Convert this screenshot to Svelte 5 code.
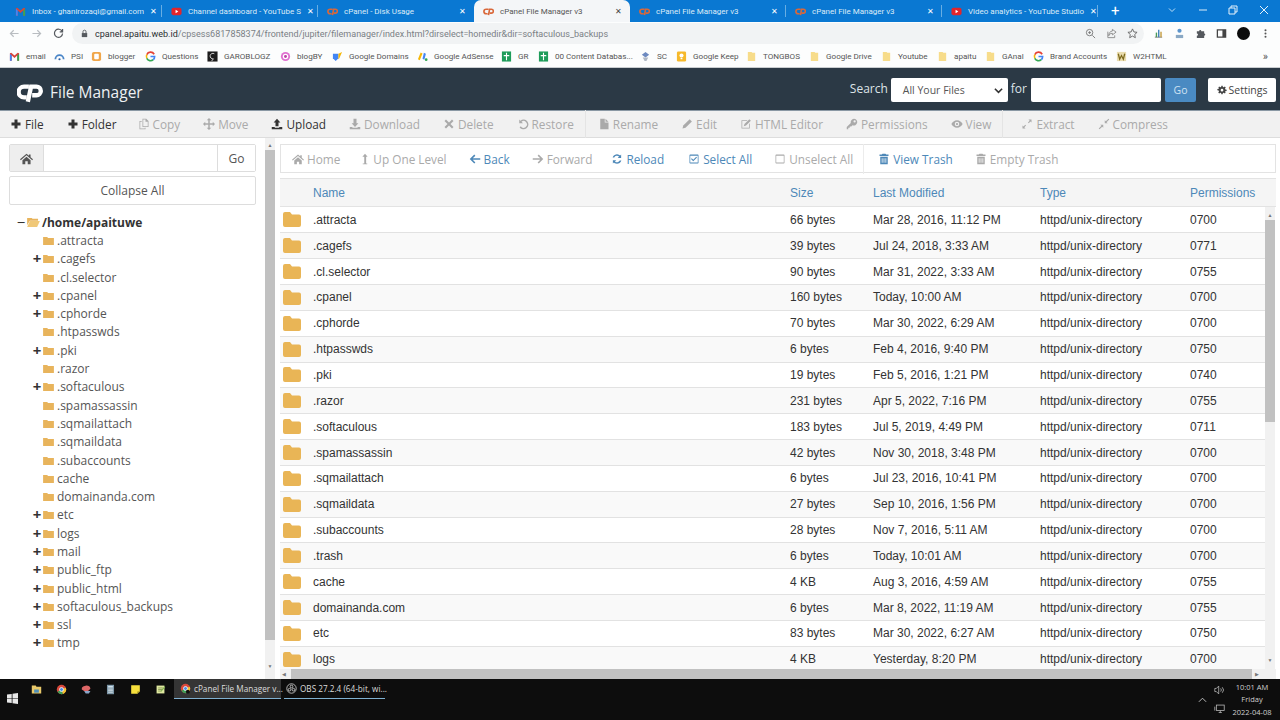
<script lang="ts">
  const icons: Record<string, string> = {
    plus: 'M6 2h4v4h4v4h-4v4H6v-4H2V6h4z',
    copy: 'M6 1h5l3 3v8H6zM7 2v9h6V5h-3V2zM2 4h3v1H3v9h6v-1h1v2H2z',
    move: 'M8 0l3 3H9v4h4V5l3 3-3 3V9H9v4h2l-3 3-3-3h2V9H3v2L0 8l3-3v2h4V3H5z',
    upload: 'M8 1l4.5 5H10v5H6V6H3.5zM1 12h4v1h6v-1h4v3H1z',
    download: 'M6 1h4v6h2.5L8 12 3.5 7H6zM1 12h3l1 1h6l1-1h3v3H1z',
    delete: 'M4 2l4 4 4-4 2 2-4 4 4 4-2 2-4-4-4 4-2-2 4-4-4-4z',
    restore: 'M3 2v5h5L6 5a4.5 4.5 0 1 1-1 6l-1.5 1.5A6.5 6.5 0 1 0 4.6 3.6z',
    rename: 'M3 1h6v5h5v9H3zM10 1l4 4h-4z',
    edit: 'M11.5 1.5l3 3L6 13l-4 1 1-4z',
    html: 'M2 3h8L9 4H3v9h9V8l1-1v7H2zM12.5 1.5l2 2L8 10l-3 1 1-3z',
    key: 'M10.5 1a4.5 4.5 0 1 1-1.9 8.6L7 11.2H5V13H3v2H1v-3l5.4-5.4A4.5 4.5 0 0 1 10.5 1zM11.5 3a1.5 1.5 0 1 0 0 3 1.5 1.5 0 0 0 0-3z',
    eye: 'M8 3c3.5 0 6 2.5 7.5 5-1.5 2.5-4 5-7.5 5S2 10.5.5 8C2 5.5 4.5 3 8 3zm0 2a3 3 0 1 0 0 6 3 3 0 0 0 0-6zm0 1.5a1.5 1.5 0 1 1 0 3 1.5 1.5 0 0 1 0-3z',
    expand: 'M10 2h4v4l-1.4-1.4-2.3 2.3-1-1 2.3-2.3zM2 14v-4l1.4 1.4 2.3-2.3 1 1-2.3 2.3L6 14z',
    compress: 'M15 2l-3.6 3.6L13 7H9V3l1.4 1.4L14 1zM1 14l3.6-3.6L3 9h4v4l-1.4-1.4L2 15z',
    home: 'M8 2l3 2.6V3h2v3.4L16 9l-1 1-7-6-7 6-1-1zM3 10l5-4.2L13 10v5H9.5v-3.5h-3V15H3z',
    up: 'M8 1l3.5 4H9.5v9H11v1H5v-1h2V5H4.5z',
    back: 'M7 2l1.5 1.5L5 7h10v2H5l3.5 3.5L7 14 1 8z',
    forward: 'M9 2L7.5 3.5 11 7H1v2h10l-3.5 3.5L9 14l6-6z',
    reload: 'M13.5 2v4.5H9l1.7-1.7A4 4 0 0 0 4.3 6H2.2a6 6 0 0 1 10-2.6zM2.5 14V9.5H7l-1.7 1.7A4 4 0 0 0 11.7 10h2.1a6 6 0 0 1-10 2.6z',
    check: 'M3 2h10a1 1 0 0 1 1 1v10a1 1 0 0 1-1 1H3a1 1 0 0 1-1-1V3a1 1 0 0 1 1-1zm0 1.5v9h10v-9zM7 11L4 8l1-1 2 2 4-4 1 1z',
    square: 'M3 2h10a1 1 0 0 1 1 1v10a1 1 0 0 1-1 1H3a1 1 0 0 1-1-1V3a1 1 0 0 1 1-1zm0 1.5v9h10v-9z',
    trash: 'M6 1h4l1 1h3v2H2V2h3zM3 5h10v10H3zM5 7v6h1V7zM7.5 7v6h1V7zM10 7v6h1V7z',
    gear: 'M7 1h2l.4 2 1.4.6L12.5 2.5 14 4l-1.2 1.7.6 1.4 2 .4v2l-2 .4-.6 1.4L14 12l-1.5 1.5-1.7-1.2-1.4.6-.4 2H7l-.4-2-1.4-.6L3.5 13.5 2 12l1.2-1.7-.6-1.4-2-.4v-2l2-.4.6-1.4L2 4l1.5-1.5 1.7 1.2 1.4-.6zM8 6a2.2 2.2 0 1 0 0 4.4A2.2 2.2 0 0 0 8 6z'
  };

  const tabs = [
    { title: 'Inbox - ghanirozaqi@gmail.com', fav: 'gmail' },
    { title: 'Channel dashboard - YouTube S', fav: 'yt' },
    { title: 'cPanel - Disk Usage', fav: 'cp' },
    { title: 'cPanel File Manager v3', fav: 'cp', active: true },
    { title: 'cPanel File Manager v3', fav: 'cp' },
    { title: 'cPanel File Manager v3', fav: 'cp' },
    { title: 'Video analytics - YouTube Studio', fav: 'yt' }
  ];

  const bookmarks = [
    { label: 'email', kind: 'gmail', w: 45 },
    { label: 'PSI', kind: 'psi', w: 37 },
    { label: 'blogger', kind: 'blogger', w: 54 },
    { label: 'Questions', kind: 'g', w: 62 },
    { label: 'GAROBLOGZ', kind: 'garo', w: 73 },
    { label: 'blogBY', kind: 'blogby', w: 52 },
    { label: 'Google Domains', kind: 'domains', w: 85 },
    { label: 'Google AdSense', kind: 'adsense', w: 84 },
    { label: 'GR', kind: 'sheet', w: 37 },
    { label: '00 Content Databas...', kind: 'sheet', w: 102 },
    { label: 'SC', kind: 'sc', w: 36 },
    { label: 'Google Keep', kind: 'keep', w: 70 },
    { label: 'TONGBOS', kind: 'fold', w: 63 },
    { label: 'Google Drive', kind: 'fold', w: 72 },
    { label: 'Youtube', kind: 'fold', w: 56 },
    { label: 'apaitu', kind: 'fold', w: 48 },
    { label: 'GAnal', kind: 'fold', w: 48 },
    { label: 'Brand Accounts', kind: 'g', w: 83 },
    { label: 'W2HTML', kind: 'w', w: 60 }
  ];

  const actions = [
    { label: 'File', icon: 'plus', on: true },
    { label: 'Folder', icon: 'plus', on: true },
    { label: 'Copy', icon: 'copy' },
    { label: 'Move', icon: 'move' },
    { label: 'Upload', icon: 'upload', on: true },
    { label: 'Download', icon: 'download' },
    { label: 'Delete', icon: 'delete' },
    { label: 'Restore', icon: 'restore', sep: true },
    { label: 'Rename', icon: 'rename' },
    { label: 'Edit', icon: 'edit' },
    { label: 'HTML Editor', icon: 'html' },
    { label: 'Permissions', icon: 'key' },
    { label: 'View', icon: 'eye', sep: true },
    { label: 'Extract', icon: 'expand' },
    { label: 'Compress', icon: 'compress' }
  ];

  const crumbs = [
    { label: 'Home', icon: 'home', tone: 'off' },
    { label: 'Up One Level', icon: 'up', tone: 'off' },
    { label: 'Back', icon: 'back', tone: 'link' },
    { label: 'Forward', icon: 'forward', tone: 'off' },
    { label: 'Reload', icon: 'reload', tone: 'link' },
    { label: 'Select All', icon: 'check', tone: 'link' },
    { label: 'Unselect All', icon: 'square', tone: 'off', sep: true },
    { label: 'View Trash', icon: 'trash', tone: 'link' },
    { label: 'Empty Trash', icon: 'trash', tone: 'off' }
  ];

  const tree = [
    { name: '.attracta' },
    { name: '.cagefs', more: true },
    { name: '.cl.selector' },
    { name: '.cpanel', more: true },
    { name: '.cphorde', more: true },
    { name: '.htpasswds' },
    { name: '.pki', more: true },
    { name: '.razor' },
    { name: '.softaculous', more: true },
    { name: '.spamassassin' },
    { name: '.sqmailattach' },
    { name: '.sqmaildata' },
    { name: '.subaccounts' },
    { name: 'cache' },
    { name: 'domainanda.com' },
    { name: 'etc', more: true },
    { name: 'logs', more: true },
    { name: 'mail', more: true },
    { name: 'public_ftp', more: true },
    { name: 'public_html', more: true },
    { name: 'softaculous_backups', more: true },
    { name: 'ssl', more: true },
    { name: 'tmp', more: true }
  ];

  const files = [
    ['.attracta', '66 bytes', 'Mar 28, 2016, 11:12 PM', '0700'],
    ['.cagefs', '39 bytes', 'Jul 24, 2018, 3:33 AM', '0771'],
    ['.cl.selector', '90 bytes', 'Mar 31, 2022, 3:33 AM', '0755'],
    ['.cpanel', '160 bytes', 'Today, 10:00 AM', '0700'],
    ['.cphorde', '70 bytes', 'Mar 30, 2022, 6:29 AM', '0700'],
    ['.htpasswds', '6 bytes', 'Feb 4, 2016, 9:40 PM', '0750'],
    ['.pki', '19 bytes', 'Feb 5, 2016, 1:21 PM', '0740'],
    ['.razor', '231 bytes', 'Apr 5, 2022, 7:16 PM', '0755'],
    ['.softaculous', '183 bytes', 'Jul 5, 2019, 4:49 PM', '0711'],
    ['.spamassassin', '42 bytes', 'Nov 30, 2018, 3:48 PM', '0700'],
    ['.sqmailattach', '6 bytes', 'Jul 23, 2016, 10:41 PM', '0700'],
    ['.sqmaildata', '27 bytes', 'Sep 10, 2016, 1:56 PM', '0700'],
    ['.subaccounts', '28 bytes', 'Nov 7, 2016, 5:11 AM', '0700'],
    ['.trash', '6 bytes', 'Today, 10:01 AM', '0700'],
    ['cache', '4 KB', 'Aug 3, 2016, 4:59 AM', '0755'],
    ['domainanda.com', '6 bytes', 'Mar 8, 2022, 11:19 AM', '0755'],
    ['etc', '83 bytes', 'Mar 30, 2022, 6:27 AM', '0750'],
    ['logs', '4 KB', 'Yesterday, 8:20 PM', '0700']
  ];
</script>

{#snippet icon(name: string, cls = 'ico')}
  <svg class={cls} viewBox="0 0 16 16" aria-hidden="true"><path fill="currentColor" fill-rule="evenodd" d={icons[name]} /></svg>
{/snippet}

{#snippet cplogo(color: string, size: number)}
  <svg width={size} height={size} viewBox="0 0 24 24" aria-hidden="true">
    <path d="M11 7H6.500a4.500 4.500 0 0 0 0 10H9" fill="none" stroke={color} stroke-width="4" />
    <path d="M10 21l3-14h5a4 4 0 0 1 0 8h-4" fill="none" stroke={color} stroke-width="4" />
  </svg>
{/snippet}

{#snippet favicon(kind: string)}
  <svg class="fav" viewBox="0 0 12 12" aria-hidden="true">
    {#if kind === 'gmail'}
      <path d="M1 2.500v8h2V5l3 2.500L9 5v5.500h2v-8L9.500 2 6 5 2.500 2z" fill="#d9453a" /><path d="M9 5l2-2v7.500H9z" fill="#34a853" /><path d="M1 3l2 2v5.500H1z" fill="#4285f4" />
    {:else if kind === 'yt'}
      <rect x="0.500" y="2" width="11" height="8" rx="2" fill="#e3252b" /><path d="M5 4.200L8 6 5 7.800z" fill="#fff" />
    {:else if kind === 'cp'}
      <path d="M6 3.500H3.500a2.500 2.500 0 0 0 0 5H5M6 10l1.200-6.500h2a2 2 0 0 1 0 4.200H7.500" fill="none" stroke="#d9683a" stroke-width="1.800" />
    {:else if kind === 'psi'}
      <path d="M1.500 9a4.500 4.500 0 0 1 9 0" fill="none" stroke="#4a86c8" stroke-width="2" /><circle cx="6" cy="9" r="1.200" fill="#2a5fa5" />
    {:else if kind === 'blogger'}
      <rect x="1" y="1" width="10" height="10" rx="2" fill="#f0a64a" /><rect x="3.500" y="3" width="5" height="6" rx="1" fill="#fff" />
    {:else if kind === 'g'}
      <path d="M10 3.500A4.500 4.500 0 0 0 2 4" fill="none" stroke="#e44235" stroke-width="1.800" /><path d="M2 4a4.500 4.500 0 0 0 0 4" fill="none" stroke="#f6b704" stroke-width="1.800" /><path d="M2 8a4.500 4.500 0 0 0 7 1.500" fill="none" stroke="#34a853" stroke-width="1.800" /><path d="M6 6h4.500A4.500 4.500 0 0 1 9 9.500" fill="none" stroke="#4285f4" stroke-width="1.800" />
    {:else if kind === 'garo'}
      <rect x="0.500" y="0.500" width="11" height="11" fill="#1c1c1c" /><path d="M8 3a3 3 0 1 0-1 5.500L5 11" fill="none" stroke="#ddd" />
    {:else if kind === 'blogby'}
      <circle cx="6" cy="6" r="5" fill="#e070d0" /><circle cx="6" cy="6" r="3" fill="#fff" /><circle cx="6" cy="6" r="1.600" fill="#c040a8" />
    {:else if kind === 'domains'}
      <path d="M1 3h6v5L4 11 1 8z" fill="#4285f4" /><path d="M7 3l4-2-3 7-1 1z" fill="#f6b704" />
    {:else if kind === 'adsense'}
      <path d="M4 1.500l2 1.200L3 10 1 9z" fill="#f6b704" /><path d="M7.500 2l2.200 1L8 9.500 6 8.500z" fill="#4285f4" /><circle cx="10" cy="9.500" r="1.500" fill="#34a853" />
    {:else if kind === 'sheet'}
      <rect x="1" y="0.500" width="10" height="11" fill="#1e9c5a" /><path d="M6 2v8M3 5h6" stroke="#fff" stroke-width="1.200" />
    {:else if kind === 'sc'}
      <path d="M6 1l4 3-4 3-4-3z" fill="#6d8ac0" /><path d="M3 7h6l-2 4H5z" fill="#b0b8c4" />
    {:else if kind === 'keep'}
      <rect x="1" y="0.500" width="10" height="11" rx="1.500" fill="#f6b92b" /><circle cx="6" cy="5" r="2.200" fill="#fff" /><rect x="5" y="7.500" width="2" height="1.500" fill="#fff" />
    {:else if kind === 'fold'}
      <path d="M2 1h4l1 1h3v9H2z" fill="#f7dc8a" />
    {:else if kind === 'w'}
      <rect x="1" y="1" width="10" height="10" fill="#e9dcae" /><path d="M2.500 3l1.500 6 2-4 2 4 1.500-6" fill="none" stroke="#7d6a1e" stroke-width="1.400" />
    {/if}
  </svg>
{/snippet}

<div class="screen">
  <div class="tabstrip">
    {#each tabs as tab, i}
      <div class="tab" class:active={tab.active} class:nosep={tab.active || tabs[i + 1]?.active || i === 2}>
        {@render favicon(tab.fav)}
        <span class="tab-title">{tab.title}</span>
        <span class="tab-x">✕</span>
      </div>
    {/each}
    <span class="newtab">+</span>
    <div class="winctl">
      <svg width="10" height="10" viewBox="0 0 10 10"><path d="M2 3.500L5 6.500l3-3" fill="none" stroke="#bfe0f7" /></svg>
      <svg width="10" height="10" viewBox="0 0 10 10"><path d="M1 5h8" stroke="#dcecf8" /></svg>
      <svg width="10" height="10" viewBox="0 0 10 10"><path d="M1 3h6v6H1zM3 3V1h6v6H7" fill="none" stroke="#e6f2fb" /></svg>
      <svg width="10" height="10" viewBox="0 0 10 10"><path d="M1 1l8 8M9 1L1 9" stroke="#e6f2fb" /></svg>
    </div>
  </div>

  <div class="addressbar">
    <div class="nav-btns">
      <svg viewBox="0 0 16 16"><path d="M13 8H3M7 4L3 8l4 4" fill="none" stroke="#b9bdc1" stroke-width="1.500" /></svg>
      <svg viewBox="0 0 16 16"><path d="M3 8h10M9 4l4 4-4 4" fill="none" stroke="#b9bdc1" stroke-width="1.500" /></svg>
      <svg viewBox="0 0 16 16"><path d="M12.500 5.500A5 5 0 1 0 13 8M13 2.500v3.500H9.500" fill="none" stroke="#55595e" stroke-width="1.500" /></svg>
    </div>
    <div class="omnibox">
      <svg class="lock" viewBox="0 0 10 10"><path d="M2 4.500h6V9H2z" fill="#55595e" /><path d="M3.300 4.500V3a1.700 1.700 0 0 1 3.400 0v1.500" fill="none" stroke="#55595e" /></svg>
      <span class="url"><b>cpanel.apaitu.web.id</b>/cpsess6817858374/frontend/jupiter/filemanager/index.html?dirselect=homedir&amp;dir=softaculous_backups</span>
      <div class="omni-tools">
        <svg viewBox="0 0 12 12"><circle cx="5" cy="5" r="3.500" fill="none" stroke="#777" /><path d="M8 8l3 3M3.500 5h3M5 3.500v3" stroke="#777" /></svg>
        <svg viewBox="0 0 12 12"><path d="M7 1.500L11 4.500 7 7.500V5.800C4.500 5.800 3.500 7 3 8.500 3 5.500 4.500 3.500 7 3.300zM2 4v6.500h7.500V8" fill="none" stroke="#8a8a8a" /></svg>
        <svg viewBox="0 0 12 12"><path d="M6 1l1.500 3.300 3.500.4-2.600 2.400.7 3.500L6 8.800l-3.100 1.800.7-3.500L1 4.700l3.500-.4z" fill="none" stroke="#666" /></svg>
      </div>
    </div>
    <div class="ext-btns">
      <svg viewBox="0 0 12 12"><path d="M2 10h8" stroke="#777" /><path d="M3 5h1.500v5H3z" fill="#4a9a5a" /><path d="M5.500 2H7v8H5.500z" fill="#3e7fb8" /><path d="M8 4h1.500v6H8z" fill="#c49a3a" /></svg>
      <svg viewBox="0 0 12 12"><circle cx="6" cy="3" r="2.300" fill="#5b94cc" /><path d="M2 11V7.500h8V11z" fill="#8aa8c4" /></svg>
      <svg viewBox="0 0 12 12"><path d="M2 3.500h2.500a1.200 1.200 0 0 1 2.400 0H10V6a1.200 1.200 0 0 1 0 2.400V11H2V8.500a1.200 1.200 0 0 0 0-2.500z" fill="#55595e" /></svg>
      <svg viewBox="0 0 12 12"><path d="M1.500 2h9v8h-9z" fill="none" stroke="#444" stroke-width="1.400" /><path d="M7 2h3.500v8H7z" fill="#444" /></svg>
      <span class="avatar"></span>
      <svg viewBox="0 0 12 12"><circle cx="6" cy="2.500" r="1.100" fill="#555" /><circle cx="6" cy="6" r="1.100" fill="#555" /><circle cx="6" cy="9.500" r="1.100" fill="#555" /></svg>
    </div>
  </div>

  <div class="bookmarks">
    {#each bookmarks as mark}
      <span class="mark" style={`width:${mark.w}px`}>
        {@render favicon(mark.kind)}
        <span>{mark.label}</span>
      </span>
    {/each}
    <span class="more-marks">»</span>
  </div>

  <header class="brand">
    <div class="logo">
      {@render cplogo('#fff', 26)}
      <span>File Manager</span>
    </div>
    <form class="search" onsubmit={(e) => e.preventDefault()}>
      <span class="search-label">Search</span>
      <span class="select">All Your Files
        <svg width="9" height="9" viewBox="0 0 10 10"><path d="M1 3l4 4 4-4" fill="none" stroke="#333" stroke-width="1.800" /></svg>
      </span>
      <span class="search-label for">for</span>
      <input type="text" aria-label="Search" />
      <button type="submit" class="go">Go</button>
      <button type="button" class="settings">{@render icon('gear', 'gear')}Settings</button>
    </form>
  </header>

  <nav class="actions">
    {#each actions as action}
      <span class="action" class:on={action.on} class:sep={action.sep}>{@render icon(action.icon)}{action.label}</span>
    {/each}
  </nav>

  <main class="body">
    <aside class="side">
      <div class="side-col">
        <div class="path-group">
          <span class="addon">{@render icon('home', 'ico home')}</span>
          <span class="path-input"></span>
          <span class="addon go-add">Go</span>
        </div>
        <button type="button" class="collapse">Collapse All</button>
        <ul class="tree">
          <li class="root">
            <span class="toggle root-toggle">−</span>
            <svg class="tf open" viewBox="0 0 14 11"><path d="M0 1h5l1 1h6v2H3L0 9z" fill="#e8b45c" /><path d="M3 4.500h11L11 11H0z" fill="#f0c878" /></svg>
            <span>/home/apaituwe</span>
          </li>
          {#each tree as node}
            <li>
              <span class="toggle">{node.more ? '+' : ''}</span>
              <svg class="tf" viewBox="0 0 12 10"><path d="M0 1h4.500l1 1.200H12V10H0z" fill="#e8b45c" /></svg>
              <span>{node.name}</span>
            </li>
          {/each}
        </ul>
      </div>
      <div class="vbar side-bar">
        <span class="arrow">▲</span>
        <span class="thumb"></span>
        <span class="arrow end">▼</span>
      </div>
    </aside>

    <section class="content">
      <div class="crumbs">
        {#each crumbs as c}
          <span class="crumb {c.tone}" class:sep={c.sep}>{@render icon(c.icon)}{c.label}</span>
        {/each}
      </div>
      <div class="table">
        <div class="row head">
          <span></span><span>Name</span><span>Size</span><span>Last Modified</span><span>Type</span><span>Permissions</span>
        </div>
        <div class="table-mid">
          <div class="rows">
            {#each files as f}
              <div class="row">
                <svg class="rf" viewBox="0 0 18 15"><path d="M2 0h5l2 2.500h7a2 2 0 0 1 2 2V13a2 2 0 0 1-2 2H2a2 2 0 0 1-2-2V2a2 2 0 0 1 2-2z" fill="#e9b556" /></svg>
                <span>{f[0]}</span>
                <span>{f[1]}</span>
                <span>{f[2]}</span>
                <span>httpd/unix-directory</span>
                <span>{f[3]}</span>
              </div>
            {/each}
          </div>
          <div class="vbar table-bar">
            <span class="arrow">▲</span>
            <span class="thumb"></span>
            <span class="arrow end">▼</span>
          </div>
        </div>
        <div class="hbar">
          <span class="arrow">◀</span>
          <span class="hthumb"></span>
          <span class="arrow">▶</span>
        </div>
      </div>
    </section>
  </main>

  <footer class="taskbar">
    <svg class="start" viewBox="0 0 14 14"><path d="M0 2l6-.8v5.400H0zM7 1l7-1v6.600H7zM0 7.400h6v5.400L0 12zM7 7.400h7V14l-7-1z" fill="#e8e8e8" /></svg>
    <div class="task-icons">
      <svg viewBox="0 0 14 14"><path d="M1 2h5l1 1.500h6V12H1z" fill="#e9c96a" /><rect x="4" y="7" width="6" height="4" fill="#4f8fb8" /></svg>
      <svg viewBox="0 0 14 14"><circle cx="7" cy="7" r="6" fill="#d9483b" /><path d="M7 7L1.800 10A6 6 0 0 0 9 12.700z" fill="#3f9f56" /><path d="M7 7l5.500-2.200A6 6 0 0 1 9 12.700z" fill="#f1c232" /><circle cx="7" cy="7" r="2.500" fill="#4a8be0" stroke="#fff" /></svg>
      <svg viewBox="0 0 14 14"><path d="M1 7a5 4 0 0 1 11-1L9 9H4z" fill="#d66" /><path d="M4 9h8l-2 3H6z" fill="#8aa5c8" /></svg>
      <svg viewBox="0 0 14 14"><rect x="2.500" y="1" width="9" height="12" fill="#7d97a8" /><rect x="4" y="2.500" width="6" height="2" fill="#cfe0ea" /><path d="M4 6.500h6M4 8.500h6M4 10.500h6" stroke="#dfe9ef" /></svg>
      <svg viewBox="0 0 14 14"><path d="M1.500 1.500h11v8l-3 3h-8z" fill="#f6df3c" /><path d="M9.500 12.500v-3h3z" fill="#8f7f1c" /></svg>
      <svg viewBox="0 0 14 14"><path d="M2 2h10v10H2z" fill="#dfe8a0" /><path d="M4 5h6M4 7h6M4 9h4" stroke="#7b8b4a" /><path d="M7 9l5-6 1 1-5 6z" fill="#7fb050" /></svg>
    </div>
    <div class="task active">
      <svg viewBox="0 0 14 14"><circle cx="7" cy="7" r="6" fill="#d9483b" /><path d="M7 7L1.800 10A6 6 0 0 0 9 12.700z" fill="#3f9f56" /><path d="M7 7l5.500-2.200A6 6 0 0 1 9 12.700z" fill="#f1c232" /><circle cx="7" cy="7" r="2.500" fill="#4a8be0" stroke="#fff" /><circle cx="10" cy="11" r="2.500" fill="#111" /></svg>
      <span>cPanel File Manager v...</span>
    </div>
    <div class="task">
      <svg viewBox="0 0 14 14"><circle cx="7" cy="7" r="6" fill="none" stroke="#ddd" /><circle cx="7" cy="4.500" r="1.700" fill="none" stroke="#ddd" /><circle cx="4.500" cy="8.500" r="1.700" fill="none" stroke="#ddd" /><circle cx="9.500" cy="8.500" r="1.700" fill="none" stroke="#ddd" /></svg>
      <span>OBS 27.2.4 (64-bit, wi...</span>
    </div>
    <div class="tray">
      <svg class="caret" viewBox="0 0 10 6"><path d="M1 5l4-4 4 4" fill="none" stroke="#ccc" /></svg>
      <div class="tray-icons">
        <svg viewBox="0 0 14 12"><path d="M1 4h2l3-3v10L3 8H1z" fill="none" stroke="#bbb" /><path d="M8.500 4a3 3 0 0 1 0 4M10.500 2.500a5 5 0 0 1 0 7" fill="none" stroke="#bbb" /></svg>
        <svg viewBox="0 0 14 12"><rect x="3" y="1" width="10" height="7" fill="none" stroke="#bbb" /><path d="M6 10.500h4M8 8v2.500M1 3v5" stroke="#bbb" /></svg>
      </div>
      <div class="clock"><span>10:01 AM</span><span>Friday</span><span>2022-04-08</span></div>
    </div>
  </footer>
</div>

<style>
  :global(body) {
    margin: 0;
    background: #fff;
  }

  .screen {
    width: 1280px;
    height: 720px;
    overflow: hidden;
    display: flex;
    flex-direction: column;
    font-family: 'Open Sans', 'Liberation Sans', sans-serif;
    font-size: 12px;
    color: #333;
  }

  .tabstrip {
    height: 22px;
    flex: none;
    background: #0a78d2;
    display: flex;
    align-items: stretch;
    padding-left: 6px;
    font-family: Roboto, 'Open Sans', sans-serif;
    font-size: 8px;
    color: #dcebf7;
    position: relative;
  }

  .tab {
    width: 156px;
    display: flex;
    align-items: center;
    gap: 6px;
    padding: 0 6px 0 9px;
    box-sizing: border-box;
    position: relative;
  }

  .tab::after {
    content: '';
    position: absolute;
    right: 0;
    top: 5px;
    bottom: 5px;
    width: 1px;
    background: #68aee3;
  }

  .tab.nosep::after {
    display: none;
  }

  .tab.active {
    background: #f4f6f8;
    color: #555;
    border-radius: 7px 7px 0 0;
  }

  .tab-title {
    flex: 1;
    white-space: nowrap;
  }

  .tab-x {
    font-size: 8px;
    color: #fff;
    width: 9px;
  }

  .tab.active .tab-x {
    color: #444;
  }

  .fav {
    width: 11px;
    height: 11px;
    flex: none;
  }

  .newtab {
    margin-left: 13px;
    font-size: 15px;
    line-height: 22px;
    color: #fff;
  }

  .winctl {
    margin-left: auto;
    width: 102px;
    margin-right: 11px;
    display: flex;
    align-items: center;
    justify-content: space-between;
    padding-bottom: 3px;
  }

  .addressbar {
    height: 23px;
    flex: none;
    background: #fcfdfd;
    display: flex;
    align-items: center;
  }

  .nav-btns {
    width: 72px;
    flex: none;
    display: flex;
    gap: 9px;
    padding-left: 8px;
    box-sizing: border-box;
  }

  .nav-btns svg {
    width: 13px;
    height: 13px;
  }

  .omnibox {
    width: 1072px;
    height: 21px;
    background: #f1f3f4;
    border-radius: 11px;
    display: flex;
    align-items: center;
    padding: 0 6px 0 8px;
    box-sizing: border-box;
  }

  .lock {
    width: 9px;
    height: 9px;
    margin-right: 6px;
  }

  .url {
    font-family: Roboto, 'Open Sans', sans-serif;
    font-size: 9.040px;
    color: #7a7f85;
    white-space: nowrap;
  }

  .url b {
    font-weight: 400;
    color: #2a2d31;
  }

  .omni-tools {
    margin-left: auto;
    display: flex;
    gap: 10px;
  }

  .omni-tools svg,
  .ext-btns svg {
    width: 11px;
    height: 11px;
  }

  .ext-btns {
    display: flex;
    align-items: center;
    gap: 10px;
    padding-left: 9px;
  }

  .avatar {
    width: 13px;
    height: 13px;
    border-radius: 50%;
    background: #0c0c0c;
  }

  .bookmarks {
    height: 23px;
    flex: none;
    background: #fcfdfd;
    border-bottom: 1px solid #c9cdd0;
    box-sizing: border-box;
    display: flex;
    align-items: center;
    padding-left: 9px;
    font-family: Roboto, 'Open Sans', sans-serif;
    font-size: 8.100px;
    color: #555;
  }

  .mark {
    display: flex;
    align-items: center;
    gap: 6px;
    white-space: nowrap;
    flex: none;
  }

  .more-marks {
    margin-left: auto;
    margin-right: 12px;
    font-size: 11px;
  }

  .brand {
    height: 42px;
    flex: none;
    background: #2b3945;
    display: flex;
    align-items: center;
    justify-content: space-between;
    padding: 0 4px 0 17px;
    box-sizing: border-box;
  }

  .logo {
    display: flex;
    align-items: center;
    gap: 7px;
    margin-top: 6px;
    color: #eef1f3;
    font-size: 15.500px;
  }

  .search {
    display: flex;
    align-items: center;
    margin: 2px 0 0;
  }

  .search-label {
    color: #dfe4e8;
    font-size: 12px;
    margin-right: 3px;
    position: relative;
    top: -2px;
  }

  .search-label.for {
    margin: 0 4px 0 3px;
  }

  .select {
    width: 117px;
    height: 24px;
    background: #fff;
    border-radius: 2px;
    box-sizing: border-box;
    display: flex;
    align-items: center;
    justify-content: space-between;
    padding: 0 5px 0 12px;
    font-size: 10.500px;
    color: #555;
  }

  .search input {
    width: 130px;
    height: 24px;
    border: 0;
    border-radius: 2px;
    box-sizing: border-box;
    padding: 0;
    background: #fff;
  }

  .go {
    width: 31px;
    height: 24px;
    margin-left: 4px;
    border: 0;
    border-radius: 2px;
    background: #4a8ac2;
    color: #cfe2f2;
    font: inherit;
    font-size: 10.500px;
    padding: 0;
  }

  .settings {
    width: 68px;
    height: 24px;
    margin-left: 12px;
    border: 0;
    border-radius: 2px;
    background: #fff;
    color: #444;
    font: inherit;
    font-size: 10.500px;
    padding: 0;
    display: flex;
    align-items: center;
    justify-content: center;
    gap: 2px;
  }

  .gear {
    width: 10px;
    height: 10px;
  }

  .actions {
    height: 28px;
    flex: none;
    background: #f1f1f1;
    border-top: 1px solid #8a98a4;
    border-bottom: 1px solid #ddd;
    box-sizing: border-box;
    display: flex;
    align-items: center;
    padding-left: 10px;
    gap: 23px;
    color: #aaa;
    font-size: 11.800px;
  }

  .action {
    display: flex;
    align-items: center;
    gap: 3px;
    white-space: nowrap;
  }

  .action.on {
    color: #333;
  }

  .action:nth-child(3) {
    margin-left: -2px;
  }

  .action.sep {
    position: relative;
    margin-right: 1px;
  }

  .action:nth-child(13) {
    margin-right: 7px;
  }

  .action.sep::after {
    content: '';
    position: absolute;
    right: -12px;
    top: -6px;
    bottom: -6px;
    width: 1px;
    background: #e4e4e4;
  }

  .ico {
    width: 12px;
    height: 12px;
    flex: none;
  }

  .body {
    flex: 1;
    min-height: 0;
    display: flex;
    background: #fff;
  }

  .side {
    width: 280px;
    flex: none;
    display: flex;
    padding-right: 5px;
    box-sizing: border-box;
  }

  .side-col {
    width: 265px;
    padding: 6px 9px 0 9px;
    box-sizing: border-box;
  }

  .path-group {
    height: 28px;
    border: 1px solid #ddd;
    box-sizing: border-box;
    display: flex;
    border-radius: 2px;
  }

  .addon {
    width: 33px;
    flex: none;
    background: #eee;
    border-right: 1px solid #ddd;
    display: flex;
    align-items: center;
    justify-content: center;
    color: #555;
  }

  .ico.home {
    width: 13px;
    height: 13px;
  }

  .path-input {
    flex: 1;
  }

  .addon.go-add {
    width: 37px;
    background: #fff;
    border-right: 0;
    border-left: 1px solid #ddd;
    font-size: 12px;
    color: #555;
  }

  .collapse {
    width: 100%;
    height: 29px;
    margin-top: 4px;
    background: #fff;
    border: 1px solid #ddd;
    border-radius: 2px;
    font: inherit;
    font-size: 12px;
    color: #555;
    padding: 0;
    display: block;
  }

  .tree {
    list-style: none;
    margin: 8px 0 0;
    padding: 0;
    font-size: 12px;
    color: #555;
  }

  .tree li {
    height: 18.300px;
    display: flex;
    align-items: center;
    padding-left: 22px;
    white-space: nowrap;
  }

  .tree li.root {
    padding-left: 6px;
    font-weight: 700;
    color: #333;
  }

  .toggle {
    width: 12px;
    flex: none;
    font-size: 15px;
    font-weight: 700;
    color: #333;
    line-height: 1;
    text-align: center;
  }

  .root-toggle {
    font-weight: 400;
  }

  .tf {
    width: 11px;
    height: 9px;
    margin: 0 3px 0 0;
    flex: none;
  }

  .tf.open {
    width: 13px;
    height: 10px;
    margin-right: 2px;
  }

  .vbar {
    width: 10px;
    flex: none;
    background: #f1f1f1;
    display: flex;
    flex-direction: column;
    align-items: center;
    box-sizing: border-box;
  }

  .arrow {
    font-size: 5px;
    line-height: 10px;
    height: 10px;
    color: #777;
    flex: none;
  }

  .arrow.end {
    margin-top: auto;
  }

  .thumb {
    width: 100%;
    background: #c1c1c1;
    display: block;
  }

  .side-bar {
    padding: 2px 0 8px;
  }

  .side-bar .thumb {
    height: 490px;
  }

  .table-bar {
    margin-right: 1px;
    padding-top: 3px;
    padding-bottom: 4px;
  }

  .table-bar .thumb {
    height: 202px;
  }

  .content {
    flex: 1;
    min-width: 0;
    padding: 6px 4px 0 0;
    display: flex;
    flex-direction: column;
  }

  .crumbs {
    height: 29px;
    flex: none;
    border: 1px solid #e3e3e3;
    box-sizing: border-box;
    display: flex;
    align-items: center;
    padding-left: 11px;
    gap: 22px;
    font-size: 11.800px;
  }

  .crumb {
    display: flex;
    align-items: center;
    gap: 3px;
    white-space: nowrap;
  }

  .crumb.off {
    color: #aaa;
  }

  .crumb.link {
    color: #4d88b8;
  }

  .crumb:nth-child(2) .ico {
    margin: 0 -1px 0 -3px;
  }

  .crumb:nth-child(5) {
    margin-left: -3px;
  }

  .crumb:nth-child(6) {
    margin-left: 2px;
  }

  .crumb.sep {
    position: relative;
    margin-right: 3px;
  }

  .crumb.sep::after {
    content: '';
    position: absolute;
    right: -11px;
    top: -7px;
    bottom: -7px;
    width: 1px;
    background: #ececec;
  }

  .table {
    flex: 1;
    min-height: 0;
    margin-top: 5px;
    display: flex;
    flex-direction: column;
  }

  .table-mid {
    flex: 1;
    min-height: 0;
    display: flex;
  }

  .rows {
    flex: 1;
    min-width: 0;
    overflow: hidden;
    padding-top: 0.500px;
  }

  .row {
    height: 25.850px;
    display: grid;
    grid-template-columns: 33px 477px 83px 167px 150px 1fr;
    align-items: center;
    border-bottom: 1px solid #e2e2e2;
    box-sizing: border-box;
    font-family: 'Liberation Sans', Arial, sans-serif;
    font-size: 12px;
    color: #333;
    white-space: nowrap;
  }

  .row:nth-child(even) {
    background: #f9f9f9;
  }

  .row.head {
    height: 29px;
    flex: none;
    background: #f5f5f5;
    border: 1px solid #e3e3e3;
    border-width: 1px 0 1px 0;
    color: #4d88b8;
  }

  .rf {
    width: 18px;
    height: 15px;
    margin-left: 3px;
  }

  .hbar {
    height: 10px;
    flex: none;
    background: #f1f1f1;
    display: flex;
    align-items: center;
    justify-content: space-between;
    padding: 0 15px 0 2px;
  }

  .hthumb {
    flex: 1;
    height: 10px;
    margin: 0 3px 0 3px;
    background: #c1c1c1;
  }

  .hbar .arrow {
    line-height: 10px;
    width: 6px;
  }

  .taskbar {
    height: 41px;
    flex: none;
    background: #0d0d0d;
    display: flex;
    align-items: flex-start;
    color: #dcdcdc;
    font-family: 'Open Sans', sans-serif;
    font-size: 8.200px;
  }

  .start {
    width: 11px;
    height: 11px;
    margin: 14px 0 0 7px;
    flex: none;
  }

  .task-icons {
    display: flex;
    gap: 13.800px;
    margin: 5px 0 0 13px;
    width: 143px;
    flex: none;
  }

  .task-icons svg {
    width: 11px;
    height: 11px;
    flex: none;
  }

  .task {
    height: 20px;
    width: 101px;
    margin-right: 3px;
    border-bottom: 1px solid #7fb0d0;
    box-sizing: border-box;
    display: flex;
    align-items: center;
    gap: 3px;
    padding-left: 2px;
    white-space: nowrap;
  }

  .task.active {
    width: 107px;
    background: #353535;
    padding-left: 6px;
  }

  .task svg {
    width: 11px;
    height: 11px;
    flex: none;
  }

  .tray {
    margin-left: auto;
    display: flex;
    align-items: center;
    height: 41px;
    padding-right: 7px;
  }

  .caret {
    width: 9px;
    height: 6px;
    margin-right: 7px;
  }

  .tray-icons {
    display: flex;
    flex-direction: column;
    gap: 9px;
    margin-right: 6px;
  }

  .tray-icons svg {
    width: 11px;
    height: 10px;
    display: block;
  }

  .clock {
    width: 42px;
    display: flex;
    flex-direction: column;
    align-items: center;
    font-size: 7.500px;
    line-height: 12.500px;
    color: #cfcfcf;
    white-space: nowrap;
  }
</style>
